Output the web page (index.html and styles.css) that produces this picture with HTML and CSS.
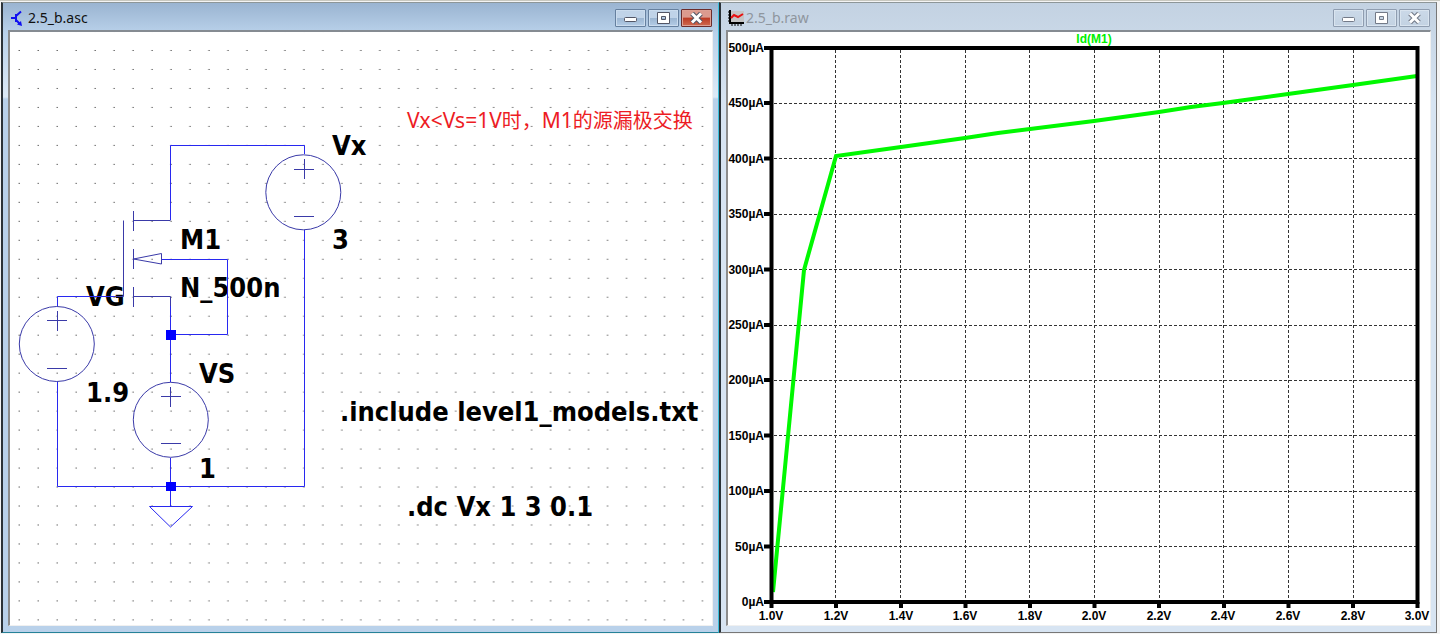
FILE: index.html
```
<!DOCTYPE html>
<html lang="zh">

<head>
    <meta charset="UTF-8">
    <title>2.5_b</title>
    <link rel="stylesheet" href="styles.css">
</head>

<body>

    <main class="desktop">

        <section class="window active">
            <header class="titlebar">
                <svg class="app-icon" viewBox="0 0 16 16">
                    <path d="M1 8H5M6 4V12M6 6L11 1.500M6 10L10 14" fill="none" stroke="#1010f0" stroke-width="2" />
                    <path d="M12 16L11 11L7 14.500Z" fill="#1010f0" />
                </svg>
                <h1 class="title">2.5_b.asc</h1>
                <div class="controls">
                    <button type="button" aria-label="Minimize">
                        <svg viewBox="0 0 16 12"><rect x="1.500" y="5.500" width="12" height="4" rx="1" fill="#fff" stroke="#535666" /></svg>
                    </button>
                    <button type="button" aria-label="Maximize">
                        <svg viewBox="0 0 16 12"><path d="M1.500 0.500H13.500V11.500H1.500ZM5.500 4.500V7.500H9.500V4.500Z" fill="#fff" fill-rule="evenodd" stroke="#535666" /></svg>
                    </button>
                    <button type="button" class="close" aria-label="Close">
                        <svg viewBox="0 0 16 12"><path d="M3 1.500L12 10.500M12 1.500L3 10.500" stroke="#535666" stroke-width="5" /><path d="M3 1.500L12 10.500M12 1.500L3 10.500" stroke="#fff" stroke-width="3" /></svg>
                    </button>
                </div>
            </header>

            <div class="client">
                <svg class="schematic" viewBox="10 32 702 592" preserveAspectRatio="xMinYMin meet">
                    <defs>
                        <pattern id="grid" x="9" y="41" width="18.98" height="18.98" patternUnits="userSpaceOnUse">
                            <rect x="9.500" y="9" width="1.500" height="1" fill="#666" />
                        </pattern>
                    </defs>
                    <rect x="10" y="32" width="702" height="592" fill="url(#grid)" />

                    <!-- labels -->
                    <text class="part" x="332" y="155">Vx</text>
                    <text class="part" x="332" y="249">3</text>
                    <text class="part" x="180" y="249">M1</text>
                    <text class="part" x="180" y="297">N_500n</text>
                    <text class="part" x="86" y="306">VG</text>
                    <text class="part" x="86" y="402">1.9</text>
                    <text class="part" x="199" y="383">VS</text>
                    <text class="part" x="199" y="478">1</text>
                    <text class="part" x="340" y="421">.include level1_models.txt</text>
                    <text class="part" x="407" y="516">.dc Vx 1 3 0.1</text>

                    <!-- wires -->
                    <g class="wire">
                        <path d="M57.500 306V296.500H114" />
                        <path d="M170.500 220V145.500H304.500V154" />
                        <path d="M162 259.500H227.500V334.500H170.500" />
                        <path d="M170.500 306V382" />
                        <path d="M57.500 382V486.500H304.500V230" />
                        <path d="M170.500 458V506.500M149.500 506.500H192.500L170.500 527Z" />
                    </g>

                    <!-- M1 and the three sources -->
                    <g class="symbol">
                        <path d="M114 296.500H123.500V220.500" />
                        <path d="M133.500 211V231M133.500 220.500H170.500" />
                        <path d="M133.500 249V269M133.500 259L161.500 253.500V264Z" />
                        <path d="M133.500 287V307M133.500 296.500H170.500V306" />
                        <circle cx="56.800" cy="344" r="37.500" />
                        <path d="M47 320.500H67M57.500 311V331M47 368.500H67" />
                        <circle cx="170.800" cy="419.800" r="37.500" />
                        <path d="M161 396.500H181M170.500 387V407M161 443.500H181" />
                        <circle cx="303.300" cy="192.300" r="37.500" />
                        <path d="M294 169.500H314M304.500 159V179M294 216.500H314" />
                    </g>

                    <rect class="node" x="166" y="330" width="10" height="10" />
                    <rect class="node" x="166" y="482" width="10" height="9" />

                    <text class="note" x="407" y="128"><tspan class="latin">Vx&lt;Vs=1V</tspan>时，<tspan class="latin">M1</tspan>的源漏极交换</text>
                </svg>
            </div>
        </section>

        <section class="window">
            <header class="titlebar">
                <svg class="app-icon" viewBox="0 0 16 16">
                    <rect x="2" y="1" width="14" height="12" fill="#c4c4c4" />
                    <path d="M2 0V13H16" fill="none" stroke="#000" stroke-width="2" />
                    <path d="M0 2H2M0 5H2M0 8H2M0 11H2M4 13V16M7 13V16M10 13V16M13 13V16" stroke="#000" />
                    <path d="M3 8L6 5L10 7L15 4" fill="none" stroke="#e81010" stroke-width="2" />
                </svg>
                <h1 class="title">2.5_b.raw</h1>
                <div class="controls">
                    <button type="button" aria-label="Minimize">
                        <svg viewBox="0 0 16 12"><rect x="1.500" y="5.500" width="12" height="4" rx="1" fill="#fff" stroke="#737a88" /></svg>
                    </button>
                    <button type="button" aria-label="Maximize">
                        <svg viewBox="0 0 16 12"><path d="M1.500 0.500H13.500V11.500H1.500ZM5.500 4.500V7.500H9.500V4.500Z" fill="#fff" fill-rule="evenodd" stroke="#737a88" /></svg>
                    </button>
                    <button type="button" aria-label="Close">
                        <svg viewBox="0 0 16 12"><path d="M3 1.500L12 10.500M12 1.500L3 10.500" stroke="#737a88" stroke-width="5" /><path d="M3 1.500L12 10.500M12 1.500L3 10.500" stroke="#fff" stroke-width="3" /></svg>
                    </button>
                </div>
            </header>

            <div class="client">
                <svg class="plot" viewBox="728 32 702 592" preserveAspectRatio="xMinYMin meet">
                    <text class="trace-name" x="1094" y="43">Id(M1)</text>

                    <path class="gridline" d="M835.500 50V601M900.500 50V601M965.500 50V601M1029.500 50V601M1094.500 50V601M1159.500 50V601M1223.500 50V601M1288.500 50V601M1353.500 50V601" />
                    <path class="gridline" d="M774 103.500H1416M774 158.500H1416M774 214.500H1416M774 269.500H1416M774 325.500H1416M774 380.500H1416M774 435.500H1416M774 491.500H1416M774 546.500H1416" />

                    <polyline class="trace" points="773,592 804,270 836,156 901,147 965,138 998,133 1030,129 1094,121 1159,112 1191,107 1223,103 1288,94 1353,85 1417,76" />

                    <!-- frame and ticks -->
                    <rect class="axis" x="771.500" y="48" width="646" height="554" />
                    <path class="axis" d="M764 48H771M764 103H771M764 158.500H771M764 214H771M764 269.500H771M764 325H771M764 380H771M764 435.500H771M764 491H771M764 546.500H771M764 602H771" />
                    <path class="axis" d="M771.500 602V608M836 602V608M901 602V608M965.500 602V608M1030 602V608M1094.500 602V608M1159 602V608M1224 602V608M1288.500 602V608M1353 602V608M1417.500 602V608" />

                    <g class="y-label">
                        <text x="764" y="52">500µA</text>
                        <text x="764" y="107">450µA</text>
                        <text x="764" y="163">400µA</text>
                        <text x="764" y="218">350µA</text>
                        <text x="764" y="274">300µA</text>
                        <text x="764" y="329">250µA</text>
                        <text x="764" y="384">200µA</text>
                        <text x="764" y="440">150µA</text>
                        <text x="764" y="495">100µA</text>
                        <text x="764" y="551">50µA</text>
                        <text x="764" y="606">0µA</text>
                    </g>

                    <g class="x-label">
                        <text x="771" y="620">1.0V</text>
                        <text x="836" y="620">1.2V</text>
                        <text x="901" y="620">1.4V</text>
                        <text x="965" y="620">1.6V</text>
                        <text x="1030" y="620">1.8V</text>
                        <text x="1094" y="620">2.0V</text>
                        <text x="1159" y="620">2.2V</text>
                        <text x="1223" y="620">2.4V</text>
                        <text x="1288" y="620">2.6V</text>
                        <text x="1353" y="620">2.8V</text>
                        <text x="1417" y="620">3.0V</text>
                    </g>
                </svg>
            </div>
        </section>

    </main>

</body>

</html>
```
FILE: styles.css
```
* {
    box-sizing: border-box;
}

body {
    margin: 0;
    background: #f4f4f4;
    font-family: "Noto Sans", "Open Sans", sans-serif;
}

.desktop {
    display: flex;
    height: 100vh;
    padding: 1px 3px 1px 1px;
    border-top: 1px solid #c8c8c0;
    background: #f4f4f4;
}

.window {
    flex: 1;
    min-width: 0;
    display: flex;
    flex-direction: column;
    padding: 0 5px 6px 5px;
    border: 1px solid #777;
    border-left: 2px solid #2b3238;
    border-top-color: #8d9698;
    background: linear-gradient(#c3d2e2, #d7e4f2 100px);
}

.window.active {
    border-bottom-color: #258299;
    border-right-color: #3cc0dc;
    background: linear-gradient(#9ab4d1, #b9d1ea 30px, #dce9f6 94px, #b9d1ea 96px);
}

.titlebar {
    display: flex;
    align-items: center;
    height: 27px;
    padding: 3px 1px 0 2px;
}

.app-icon {
    width: 16px;
    height: 16px;
}

.title {
    flex: 1;
    margin: 0 0 0 2px;
    font-size: 14px;
    font-weight: normal;
    line-height: 20px;
    color: #8f969e;
}

.active .title {
    color: #111;
}

.controls {
    display: flex;
    gap: 2px;
}

.controls button {
    display: flex;
    align-items: center;
    justify-content: center;
    width: 31px;
    height: 18px;
    padding: 0;
    border: 1px solid #8f9db0;
    border-radius: 1px;
    background: linear-gradient(#cbd9e8, #c3d2e2);
    box-shadow: inset 0 0 0 1px #d9e4ef;
}

.active .controls button {
    border-color: #66809f;
    background: linear-gradient(#c0d3e8 50%, #9bb5d1 50%, #b4cce6);
    box-shadow: inset 0 0 0 1px #cbdcee;
}

.active .controls .close {
    border-color: #6b2c2c;
    background: linear-gradient(#dc9a8e 45%, #bc3a24 50%, #cf6a50);
    box-shadow: inset 0 0 0 1px #dda094;
}

.controls svg {
    flex: none;
    width: 16px;
    height: 12px;
}

.client {
    flex: 1;
    min-height: 0;
    overflow: hidden;
    border: 1px solid #f0f0f0;
    border-top: 2px solid #858b92;
    border-left: 2px solid #8c8c8c;
    background: #fff;
}

.schematic,
.plot {
    display: block;
    width: 100%;
    height: 100%;
}

.wire path {
    fill: none;
    stroke: #2828f0;
}

.symbol path,
.symbol circle {
    fill: none;
    stroke: #3a3aa8;
}

.node {
    fill: #0000ff;
}

.part {
    font-family: "DejaVu Sans Condensed", "Noto Sans", sans-serif;
    font-size: 27px;
    font-weight: bold;
}

.note {
    font-family: "Noto Sans", "Noto Sans CJK SC", sans-serif;
    font-size: 20px;
    fill: #ed1c24;
}

.note .latin {
    font-size: 21px;
}

.plot text {
    font-family: "Liberation Sans", Arial, sans-serif;
    font-size: 12px;
    font-weight: bold;
}

.plot .trace-name {
    fill: #00f000;
    text-anchor: middle;
}

.y-label {
    text-anchor: end;
}

.x-label {
    text-anchor: middle;
}

.gridline {
    fill: none;
    stroke: #333;
    stroke-dasharray: 3 2;
}

.axis {
    fill: none;
    stroke: #000;
    stroke-width: 4;
}

.trace {
    fill: none;
    stroke: #00f800;
    stroke-width: 4;
}
```
